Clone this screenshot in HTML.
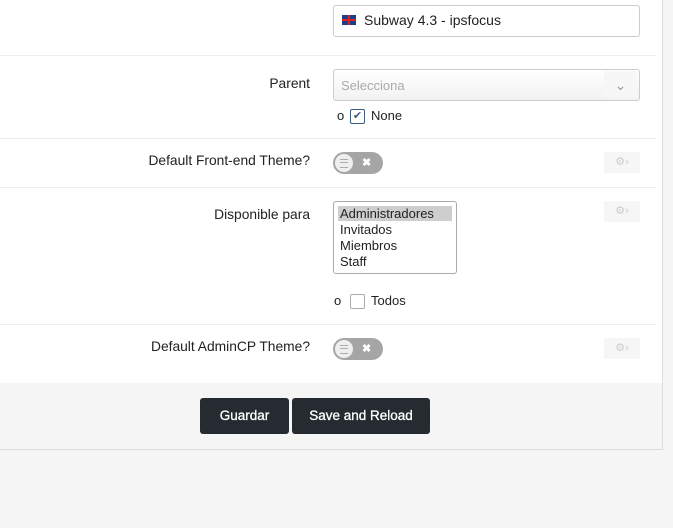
<!DOCTYPE html>
<html><head><style>
body{margin:0;width:673px;height:528px;background:#f5f5f5;font-family:"Liberation Sans",sans-serif;font-size:13px;color:#222;position:relative;overflow:hidden}
.panel{position:absolute;left:0;top:0;width:663px;height:450px;background:#fff;border-right:1px solid #ddd;border-bottom:1px solid #ddd;box-sizing:border-box}
.a{position:absolute}
.sep{position:absolute;left:0;width:656px;height:1px;background:#ececec}
.lbl{position:absolute;right:363px;text-align:right;font-size:13.8px;color:#222}
.gear{position:absolute;left:604px;width:36px;height:21px;background:#f6f6f6;border-radius:2px;color:#ccc;font-size:11px;text-align:center;line-height:21px}
.tog{position:absolute;left:333px;width:50px;height:22px;background:#a5a5a5;border-radius:11px}
.tog .k{position:absolute;left:2px;top:2px;width:18px;height:18px;border-radius:50%;background:#eee}
.tog .k:before{content:"";position:absolute;left:5px;top:5px;width:8px;height:7px;border-top:1px solid #aaa;border-bottom:1px solid #aaa}
.tog .k:after{content:"";position:absolute;left:5px;top:8px;width:8px;height:1px;background:#aaa}
.tog .x{position:absolute;left:29px;top:4px;color:#fff;font-weight:bold;font-size:11px}
.btn{position:absolute;top:398px;height:36px;background:#252b30;color:#fff;border-radius:3px;font-size:13.5px;text-align:center;line-height:36px;-webkit-text-stroke:0.3px #fff}
</style></head><body>
<div class="panel"></div>
<div class="a" style="left:0;top:383px;width:662px;height:66px;background:#f5f5f5"></div>

<div class="a" style="left:333px;top:5px;width:305px;height:30px;border:1px solid #ccc;border-radius:3px;background:#fff"></div>
<div class="a" style="left:342px;top:15px;width:14px;height:10px;background:#1f3f8a"></div>
<div class="a" style="left:342px;top:19px;width:14px;height:2px;background:#d22"></div>
<div class="a" style="left:348px;top:15px;width:2px;height:10px;background:#d22"></div>
<div class="a" style="left:364px;top:12px;font-size:14px">Subway 4.3 - ipsfocus</div>
<div class="sep" style="top:55px"></div>

<div class="lbl" style="top:76px">Parent</div>
<div class="a" style="left:333px;top:69px;width:305px;height:30px;border:1px solid #ccc;border-radius:3px;background:linear-gradient(#fff,#f2f2f2)"></div>
<div class="a" style="left:341px;top:78px;color:#aaa">Selecciona</div>
<div class="a" style="left:604px;top:71px;width:33px;height:26px;background:#f7f7f7;color:#999;font-size:14px;text-align:center;line-height:28px">⌄</div>
<div class="a" style="left:337px;top:108px">o</div>
<div class="a" style="left:350px;top:109px;width:13px;height:13px;border:1px solid #3d5a80;border-radius:2px;color:#3d5a80;font-size:11px;line-height:13px;text-align:center">✔</div>
<div class="a" style="left:371px;top:108px">None</div>
<div class="sep" style="top:138px"></div>

<div class="lbl" style="top:153px">Default Front-end Theme?</div>
<div class="tog" style="top:152px"><div class="k"></div><div class="x">✖</div></div>
<div class="gear" style="top:152px">⚙›</div>
<div class="sep" style="top:187px"></div>

<div class="lbl" style="top:207px">Disponible para</div>
<div class="a" style="left:333px;top:201px;width:122px;height:71px;border:1px solid #aaa;border-radius:3px;background:#fff"></div>
<div class="a" style="left:338px;top:206px;width:114px;height:15px;background:#cecece"></div>
<div class="a" style="left:340px;top:206px;line-height:16px">Administradores<br>Invitados<br>Miembros<br>Staff</div>
<div class="gear" style="top:201px">⚙›</div>
<div class="a" style="left:334px;top:293px">o</div>
<div class="a" style="left:350px;top:294px;width:13px;height:13px;border:1px solid #aaa;border-radius:2px"></div>
<div class="a" style="left:371px;top:293px">Todos</div>
<div class="sep" style="top:324px"></div>

<div class="lbl" style="top:339px">Default AdminCP Theme?</div>
<div class="tog" style="top:338px"><div class="k"></div><div class="x">✖</div></div>
<div class="gear" style="top:338px">⚙›</div>

<div class="btn" style="left:200px;width:89px">Guardar</div>
<div class="btn" style="left:292px;width:138px">Save and Reload</div>
</body></html>
